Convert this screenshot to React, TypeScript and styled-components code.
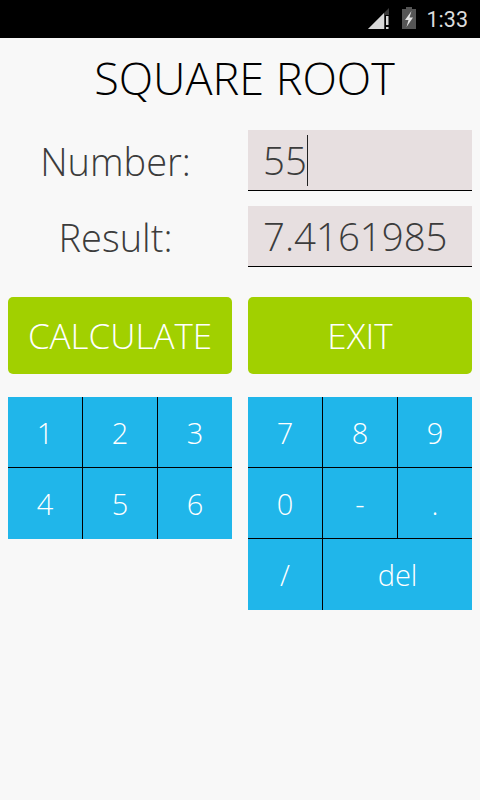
import React from 'react';
import styled, { createGlobalStyle } from 'styled-components';

const GlobalStyle = createGlobalStyle`
  html, body {
    margin: 0;
    padding: 0;
    background: #f8f8f8;
    font-family: "Open Sans", "Liberation Sans", sans-serif;
    font-weight: 300;
  }
`;

const leftKeys = ['1', '2', '3', '4', '5', '6'];
const rightKeys = ['7', '8', '9', '0', '-', '.', '/'];

const App: React.FC = () => (
  <Screen>
    <GlobalStyle />
    <StatusBar>
      <svg width="21" height="24" viewBox="0 0 21 24">
        <path d="M0 22 L21 1 V8 H17 V22 Z" fill="#3a3a3a" />
        <path d="M0 22 L16 6 V22 Z" fill="#d8d8d8" />
        <rect x="18" y="9" width="2.5" height="9" fill="#d8d8d8" />
        <rect x="18" y="20" width="2.5" height="2" fill="#d8d8d8" />
      </svg>
      <svg width="14" height="24" viewBox="0 0 14 24">
        <path d="M4 0 H10 V2 H14 V22 H0 V2 H4 Z" fill="#555" />
        <path d="M9.5 4 L3 13 H6.5 L4.5 20 L11 10.5 H7.5 Z" fill="#e4e4e4" />
      </svg>
      <Clock>1:33</Clock>
    </StatusBar>
    <Title>SQUARE ROOT</Title>
    <FieldRow>
      <FieldLabel>Number:</FieldLabel>
      <FieldBox>
        55
        <Caret />
      </FieldBox>
    </FieldRow>
    <FieldRow>
      <FieldLabel>Result:</FieldLabel>
      <FieldBox>7.4161985</FieldBox>
    </FieldRow>
    <Columns>
      <ActionButton>CALCULATE</ActionButton>
      <ActionButton>EXIT</ActionButton>
    </Columns>
    <PadColumns>
      <Keypad $rows="70px 71px">
        {leftKeys.map((k) => (
          <Key key={k}>{k}</Key>
        ))}
      </Keypad>
      <Keypad $rows="70px 70px 71px">
        {rightKeys.map((k) => (
          <Key key={k}>{k}</Key>
        ))}
        <Key $wide>del</Key>
      </Keypad>
    </PadColumns>
  </Screen>
);

const Screen = styled.div`
  width: 480px;
  height: 800px;
  overflow: hidden;
  background: #f8f8f8;
`;

const StatusBar = styled.div`
  height: 38px;
  background: #000;
  display: flex;
  align-items: center;
  justify-content: flex-end;
  padding-right: 12px;
  box-sizing: border-box;
  svg:first-child {
    margin-right: 13px;
  }
`;

const Clock = styled.span`
  margin-left: 11px;
  color: #dcdcdc;
  font-family: Roboto, sans-serif;
  font-weight: 400;
  font-size: 21.5px;
`;

const Title = styled.div`
  height: 80px;
  line-height: 80px;
  padding-left: 9px;
  text-align: center;
  font-size: 45px;
  color: #000;
`;

const FieldRow = styled.div`
  display: grid;
  grid-template-columns: 224px 224px;
  column-gap: 16px;
  padding: 12px 8px 0;
  align-items: center;
  &:first-of-type {
    padding-top: 0;
  }
  & + & {
    margin-top: 3px;
  }
`;

const FieldLabel = styled.div`
  padding-right: 9px;
  text-align: center;
  font-size: 38px;
  color: #3c3c3c;
`;

const FieldBox = styled.div`
  height: 60px;
  background: #e7dfe0;
  border-bottom: 1px solid #000;
  padding-left: 15px;
  font-size: 38.4px;
  line-height: 60px;
  color: #3c3c3c;
  display: flex;
  align-items: center;
`;

const Caret = styled.span`
  width: 1px;
  height: 51px;
  background: #222;
`;

const Columns = styled.div`
  display: grid;
  grid-template-columns: 224px 224px;
  column-gap: 16px;
  padding: 30px 8px 0;
`;

const ActionButton = styled.div`
  height: 77px;
  border-radius: 5px;
  background: #a1d000;
  color: #fff;
  font-size: 35px;
  display: flex;
  align-items: center;
  justify-content: center;
`;

const PadColumns = styled(Columns)`
  padding-top: 23px;
  align-items: start;
`;

const Keypad = styled.div<{ $rows: string }>`
  display: grid;
  grid-template-columns: repeat(3, 74px);
  grid-template-rows: ${(p) => p.$rows};
  gap: 1px;
  background: #000;
`;

const Key = styled.div<{ $wide?: boolean }>`
  grid-column: ${(p) => (p.$wide ? 'span 2' : 'auto')};
  background: #20b6ea;
  color: #fff;
  font-size: 29px;
  display: flex;
  align-items: center;
  justify-content: center;
`;

export default App;
